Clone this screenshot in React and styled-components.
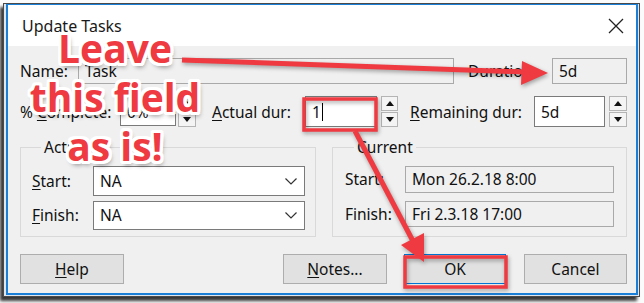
import React from 'react';
import styled, { createGlobalStyle } from 'styled-components';

const UI_FONT = '"Noto Sans", "Open Sans", "DejaVu Sans", sans-serif';
const RED = '#ee3a40';

const GlobalStyle = createGlobalStyle`
  html, body {
    margin: 0;
    padding: 0;
    background: #ffffff;
  }
  body {
    font-family: ${UI_FONT};
  }
`;

const Page = styled.div`
  position: relative;
  width: 644px;
  height: 303px;
  overflow: hidden;
  background: #fbfbfb;
`;

const Frame = styled.div`
  box-sizing: border-box;
  margin: 3px 0 0 3px;
  width: 637px;
  height: 294px;
  padding: 0 1px 1px 2px;
  border: 1px solid #4a4a4a;
  background: #dfe6ee;
  box-shadow: -3px 4px 3px rgba(0, 0, 0, 0.78);
`;

const Dialog = styled.div`
  box-sizing: border-box;
  height: 100%;
  display: flex;
  flex-direction: column;
  border: 2px solid #1a7fd6;
  border-top-width: 1px;
  background: #f0f0f0;
  color: #111;
  font-size: 15.5px;
`;

const TitleBar = styled.div`
  height: 41px;
  flex: none;
  display: flex;
  align-items: center;
  justify-content: space-between;
  padding: 0 12px 0 14px;
  background: #ffffff;
  font-size: 16px;
  color: #1a1a1a;
`;

const Body = styled.div`
  flex: 1;
  display: flex;
  flex-direction: column;
  padding: 0 9px 0 12px;
`;

const Row = styled.div`
  display: flex;
  align-items: center;
  height: ${(p) => p.$h}px;
  margin-top: ${(p) => p.$mt}px;
`;

const Label = styled.span`
  flex: none;
  width: ${(p) => p.$w}px;
  margin-left: ${(p) => p.$ml || 0}px;
  white-space: nowrap;
  u {
    text-decoration: underline;
    text-underline-offset: 2px;
    text-decoration-thickness: 1px;
  }
`;

const Field = styled.div`
  box-sizing: border-box;
  flex: none;
  display: flex;
  align-items: center;
  width: ${(p) => p.$w}px;
  height: ${(p) => p.$h || 26}px;
  padding-left: 6px;
  border: 1px solid ${(p) => (p.$ro ? '#a9a9a9' : '#7a7a7a')};
  background: ${(p) => (p.$ro ? '#f0f0f0' : '#ffffff')};
  white-space: nowrap;
`;

const Caret = styled.span`
  display: inline-block;
  width: 1px;
  height: 18px;
  margin-left: 1px;
  background: #000;
`;

const Spinner = styled.div`
  box-sizing: border-box;
  flex: none;
  display: flex;
  flex-direction: column;
  gap: 1px;
  width: ${(p) => p.$w}px;
  height: 31px;
  margin-left: ${(p) => p.$ml}px;
`;

const SpinHalf = styled.div`
  flex: 1;
  display: flex;
  align-items: center;
  justify-content: center;
  border: 1px solid #b4b4b4;
  background: #f4f4f4;
`;

const Groups = styled.div`
  display: flex;
  gap: 16px;
  margin-top: 10px;
`;

const Group = styled.fieldset`
  box-sizing: border-box;
  margin: 0;
  width: ${(p) => p.$w}px;
  height: 100px;
  padding: 9px 0 0 ${(p) => p.$pl}px;
  border: 1px solid #d9d9d9;
  display: flex;
  flex-direction: column;
  gap: 5px;

  legend {
    margin-left: 9px;
    padding: 0 3px;
    line-height: 20px;
  }
`;

const GroupRow = styled.div`
  display: flex;
  align-items: ${(p) => (p.$top ? 'flex-start' : 'center')};
  height: ${(p) => p.$h}px;
  line-height: 27px;
`;

const Combo = styled.div`
  box-sizing: border-box;
  flex: none;
  display: flex;
  align-items: center;
  justify-content: space-between;
  width: 212px;
  height: ${(p) => p.$h}px;
  padding: 0 7px 0 6px;
  border: 1px solid #7a7a7a;
  background: #ffffff;
`;

const ButtonRow = styled.div`
  display: flex;
  align-items: center;
  height: 30px;
  margin-top: 17px;
`;

const Button = styled.div`
  box-sizing: border-box;
  flex: none;
  display: flex;
  align-items: center;
  justify-content: center;
  width: ${(p) => p.$w}px;
  height: 30px;
  margin-left: ${(p) => p.$ml || 0}px;
  border: 1px solid ${(p) => (p.$default ? '#0078d7' : '#adadad')};
  background: #e1e1e1;
  u {
    text-decoration: underline;
    text-underline-offset: 2px;
  }
`;

const Overlay = styled.svg`
  position: absolute;
  left: 0;
  top: 0;
  pointer-events: none;
  filter: drop-shadow(1px 2px 2px rgba(0, 0, 0, 0.35));
`;

const Callout = styled.div`
  position: absolute;
  left: 0;
  top: 23px;
  width: 230px;
  text-align: center;
  font-family: "Open Sans", "Noto Sans", sans-serif;
  font-weight: 700;
  font-size: 39px;
  line-height: 49px;
  color: ${RED};
  text-shadow:
    3px 0 0 #fff, -3px 0 0 #fff, 0 3px 0 #fff, 0 -3px 0 #fff,
    2px 2px 0 #fff, -2px 2px 0 #fff, 2px -2px 0 #fff, -2px -2px 0 #fff,
    3px 2px 0 #fff, -3px 2px 0 #fff, 3px -2px 0 #fff, -3px -2px 0 #fff,
    2px 3px 0 #fff, -2px 3px 0 #fff, 2px -3px 0 #fff, -2px -3px 0 #fff,
    2px 4px 5px rgba(0, 0, 0, 0.45);
`;

const Up = () => (
  <svg width="8" height="5" viewBox="0 0 8 5">
    <polygon points="0,5 8,5 4,0" fill="#111" />
  </svg>
);

const Down = () => (
  <svg width="8" height="5" viewBox="0 0 8 5">
    <polygon points="0,0 8,0 4,5" fill="#111" />
  </svg>
);

const Spin = ({ w, ml }) => (
  <Spinner $w={w} $ml={ml}>
    <SpinHalf>
      <Up />
    </SpinHalf>
    <SpinHalf>
      <Down />
    </SpinHalf>
  </Spinner>
);

const Chevron = () => (
  <svg width="12" height="7" viewBox="0 0 12 7">
    <polyline points="0.5,0.5 6,6 11.5,0.5" fill="none" stroke="#333" strokeWidth="1.2" />
  </svg>
);

const CloseX = () => (
  <svg width="16" height="16" viewBox="0 0 16 16">
    <path d="M1 1 L15 15 M15 1 L1 15" stroke="#222" strokeWidth="1.3" fill="none" />
  </svg>
);

const App = () => (
  <>
    <GlobalStyle />
    <Page>
      <Frame>
        <Dialog>
          <TitleBar>
            <span>Update Tasks</span>
            <CloseX />
          </TitleBar>
          <Body>
            <Row $h={26} $mt={12}>
              <Label $w={58}>Name:</Label>
              <Field $w={376} $ro>Task</Field>
              <Label $w={84} $ml={14}>Duration:</Label>
              <Field $w={75} $ro>5d</Field>
            </Row>
            <Row $h={31} $mt={12}>
              <Label $w={100}>
                % <u>C</u>omplete:
              </Label>
              <Field $w={56} $h={29}>0%</Field>
              <Spin w={18} ml={2} />
              <Label $w={93} $ml={16}>
                <u>A</u>ctual dur:
              </Label>
              <Field $w={72} $h={31}>
                1<Caret />
              </Field>
              <Spin w={17} ml={4} />
              <Label $w={124} $ml={12}>
                <u>R</u>emaining dur:
              </Label>
              <Field $w={71} $h={31}>5d</Field>
              <Spin w={18} ml={4} />
            </Row>
            <Groups>
              <Group $w={296} $pl={11}>
                <legend>Actual</legend>
                <GroupRow $h={30}>
                  <Label $w={61}>
                    <u>S</u>tart:
                  </Label>
                  <Combo $h={30}>
                    NA
                    <Chevron />
                  </Combo>
                </GroupRow>
                <GroupRow $h={29}>
                  <Label $w={61}>
                    <u>F</u>inish:
                  </Label>
                  <Combo $h={29}>
                    NA
                    <Chevron />
                  </Combo>
                </GroupRow>
              </Group>
              <Group $w={295} $pl={12}>
                <legend>Current</legend>
                <GroupRow $h={30} $top>
                  <Label $w={60}>Start:</Label>
                  <Field $w={209} $h={27} $ro>Mon 26.2.18 8:00</Field>
                </GroupRow>
                <GroupRow $h={29} $top>
                  <Label $w={60}>Finish:</Label>
                  <Field $w={209} $h={26} $ro>Fri 2.3.18 17:00</Field>
                </GroupRow>
              </Group>
            </Groups>
            <ButtonRow>
              <Button $w={104}>
                <u>H</u>elp
              </Button>
              <Button $w={104} $ml={159}>
                <u>N</u>otes...
              </Button>
              <Button $w={102} $ml={17} $default>
                OK
              </Button>
              <Button $w={103} $ml={18}>
                Cancel
              </Button>
            </ButtonRow>
          </Body>
        </Dialog>
      </Frame>

      <Overlay width="644" height="303" viewBox="0 0 644 303">
        <line x1="182" y1="60" x2="526" y2="72" stroke={RED} strokeWidth="5" />
        <polygon points="548,73 522,61 521,85" fill={RED} />
        <rect x="304" y="99" width="72" height="31" fill="none" stroke={RED} strokeWidth="3.5" />
        <line x1="355" y1="131" x2="414" y2="243" stroke={RED} strokeWidth="5" />
        <polygon points="424,262 401,245 424,233" fill={RED} />
        <rect x="405" y="257" width="101" height="30" fill="none" stroke={RED} strokeWidth="3.5" />
      </Overlay>

      <Callout>
        Leave
        <br />
        this field
        <br />
        as is!
      </Callout>
    </Page>
  </>
);

export default App;
